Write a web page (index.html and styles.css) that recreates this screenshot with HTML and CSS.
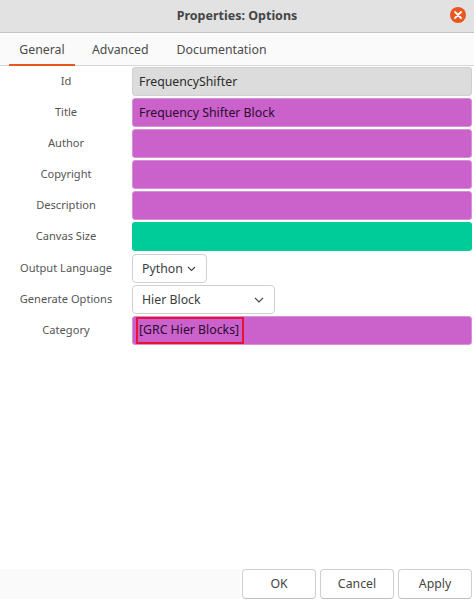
FILE: index.html
```html
<!DOCTYPE html>
<html lang="en">
<head>
<meta charset="utf-8">
<title>Properties: Options</title>
<link rel="stylesheet" href="styles.css">
</head>
<body>
<div class="dialog">
  <header class="titlebar">
    <span class="title">Properties: Options</span>
    <span class="close"><svg width="10" height="10" viewBox="0 0 10 10"><path d="M2 2l6 6M8 2l-6 6" stroke="#fff" stroke-width="1.8" stroke-linecap="round"/></svg></span>
  </header>
  <nav class="tabs">
    <span class="tab active">General</span>
    <span class="tab">Advanced</span>
    <span class="tab">Documentation</span>
  </nav>
  <main class="form">
    <div class="row"><label class="label">Id</label><div class="field grey">FrequencyShifter</div></div>
    <div class="row"><label class="label">Title</label><div class="field purple">Frequency Shifter Block</div></div>
    <div class="row"><label class="label">Author</label><div class="field purple"></div></div>
    <div class="row"><label class="label">Copyright</label><div class="field purple"></div></div>
    <div class="row"><label class="label">Description</label><div class="field purple"></div></div>
    <div class="row"><label class="label">Canvas Size</label><div class="field green"></div></div>
    <div class="row first-select"><label class="label">Output Language</label>
      <div class="select short">Python<svg class="chev" width="9" height="6" viewBox="0 0 9 6"><path d="M1 1l3.5 3.5L8 1" fill="none" stroke="#444" stroke-width="1.1"/></svg></div></div>
    <div class="row"><label class="label">Generate Options</label>
      <div class="select wide">Hier Block<svg class="chev" width="10" height="6" viewBox="0 0 10 6"><path d="M1 1l4 4 4-4" fill="none" stroke="#444" stroke-width="1.1"/></svg></div></div>
    <div class="row"><label class="label">Category</label><div class="field purple"><span class="mark">[GRC Hier Blocks]</span></div></div>
  </main>
  <footer class="actions">
    <button class="btn">OK</button>
    <button class="btn">Cancel</button>
    <button class="btn">Apply</button>
  </footer>
</div>
</body>
</html>
```
FILE: styles.css
```css
* { box-sizing: border-box; }
html, body { margin: 0; height: 100%; }
body { font-family: "Noto Sans", "Open Sans", sans-serif; font-size: 12.3px; color: #3d3d3d; background: #fff; }
.dialog { width: 474px; height: 600px; display: flex; flex-direction: column; background: #fff; }
.titlebar { height: 33px; flex: none; background: #e2e2e2; border-bottom: 1px solid #c4c4c4; display: flex; align-items: center; justify-content: center; position: relative; }
.title { font-weight: 700; font-size: 12.5px; line-height: 30px; color: #454545; }
.close { position: absolute; left: 450px; top: 7px; width: 16px; height: 16px; border-radius: 50%; background: #e9561f; display: flex; align-items: center; justify-content: center; }
.tabs { height: 33px; flex: none; display: flex; background: #fafafa; border-bottom: 1px solid #d5d5d5; padding-left: 9px; }
.tab { padding: 8px 10px 0; margin-right: 8px; color: #4a4a4a; font-size: 12.3px; }
.tab.active { width: 66px; padding: 8px 0 0; text-align: center; margin-right: 7px; border-bottom: 2px solid #e9561f; height: 33px; }
.form { flex: 1; display: flex; flex-direction: column; padding: 0 2px 0 0; }
.row { display: flex; align-items: center; height: 31px; }
.first-select { margin-top: 1px; }
.label { width: 132px; flex: none; text-align: center; font-size: 11.1px; padding-bottom: 2px; color: #555; }
.field { flex: 1; height: 29px; border-radius: 3px; padding: 0 7px 0 6px; display: flex; align-items: center; color: #2a0a2e; font-size: 12.3px; }
.grey { background: #dcdcdc; border: 1px solid #cfcfcf; color: #2b2b2b; }
.purple { background: #cb62cb; border: 1px solid #d88fd8; }
.green { background: #00cc99; }
.mark { border: 2px solid #e6123a; margin: 0 0 0 -3px; padding: 0 3px 2px 1px; height: 27px; display: flex; align-items: center; }
.select { height: 29px; background: #fff; border: 1px solid #d0d0d0; border-radius: 4px; display: flex; align-items: center; padding: 0 10px 0 9px; color: #3d3d3d; font-size: 12.3px; justify-content: space-between; }
.short { width: 75px; }
.wide { width: 143px; }
.actions { flex: none; height: 30px; margin-bottom: 1px; display: flex; justify-content: flex-end; gap: 4px; padding-right: 2px; background: linear-gradient(to right, #fafafa, #fafafa 240px, #fff 240px); }
.btn { width: 74px; height: 30px; background: #fff; border: 1px solid #cfcfcf; border-bottom-color: #bdbdbd; border-radius: 4px; font: inherit; color: #444; padding: 0 0 2px; }
```
